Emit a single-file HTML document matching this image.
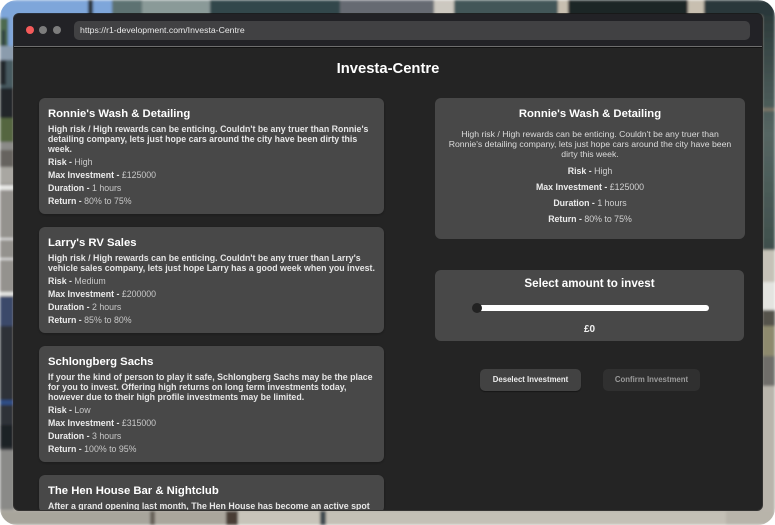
<!DOCTYPE html>
<html><head><meta charset="utf-8">
<style>
html,body{margin:0;padding:0;width:775px;height:525px;overflow:hidden;background:#fff;font-family:"Liberation Sans",sans-serif;color:#eee}
#bg{position:absolute;left:0;top:0}
.win{position:absolute;left:14px;top:14px;width:748px;height:496px;background:#242424;border-radius:5px;overflow:hidden;box-shadow:0 0 0 1px rgba(20,20,20,.8);filter:blur(.25px)}
.bar{position:absolute;left:0;top:0;width:748px;height:32px;background:#222226;border-bottom:1px solid #6e6e6e;box-shadow:0 1px 0 #111}
.dot{position:absolute;top:12px;width:8px;height:8px;border-radius:50%;background:#7c7c7c}
.url{position:absolute;left:60px;top:7px;width:676px;height:19px;background:#414143;border-radius:5px;font-size:8.7px;line-height:19px;text-indent:6px;color:#e8e8e8}
h1{position:absolute;left:0;top:47px;width:748px;margin:0;text-align:center;font-size:14.8px;line-height:17px;color:#fff}
.card{position:absolute;left:25px;width:327px;padding:8px 9px;background:#484848;border-radius:6px;box-sizing:content-box;box-shadow:0 1px 2px rgba(0,0,0,.25)}
.card h2,.det h2{margin:0 0 3px;font-size:11.3px;line-height:15px;color:#fff;position:relative;top:1px}
.card p{margin:0;font-size:8.8px;line-height:10px;font-weight:bold;color:#e6e6e6}
.card div{font-size:8.8px;line-height:13px;color:#c8c8c8}
.card div:first-of-type{margin-top:2px}
b{color:#ececec}
.det{position:absolute;left:421px;top:84px;width:310px;height:141px;background:#484848;border-radius:6px;text-align:center}
.det h2{position:absolute;top:9px;left:0;width:100%}
.det p{position:absolute;top:31px;left:0;width:310px;margin:0;font-size:8.7px;line-height:10px;color:#dcdcdc}
.det div{position:absolute;left:0;width:100%;font-size:8.8px;line-height:11px;color:#d0d0d0}
.sel{position:absolute;left:421px;top:256px;width:309px;height:71px;background:#484848;border-radius:6px;text-align:center}
.sel h3{position:absolute;left:0;top:6px;width:100%;margin:0;font-size:11.6px;line-height:15px;color:#fff}
.track{position:absolute;left:42px;top:35px;width:232px;height:6px;background:#fff;border-radius:3px}
.knob{position:absolute;left:37px;top:33px;width:10px;height:10px;border-radius:50%;background:#222}
.amt{position:absolute;left:0;top:54px;width:100%;font-size:10px;line-height:12px;font-weight:bold;color:#f0f0f0}
.btn{position:absolute;top:355px;height:22px;border-radius:5px;text-align:center;font-size:7.8px;line-height:22px;font-weight:bold}
</style></head><body>
<svg id="bg" width="775" height="525" viewBox="0 0 775 525">
<defs><clipPath id="c"><rect width="775" height="525" rx="17"/></clipPath>
<filter id="f" x="-2%" y="-2%" width="104%" height="104%"><feGaussianBlur stdDeviation="1.2"/></filter>
<linearGradient id="r" x1="0" y1="0" x2="0" y2="1"><stop offset="0" stop-color="#2e3c3c"/><stop offset=".5" stop-color="#566663"/><stop offset="1" stop-color="#3f4f4c"/></linearGradient></defs>
<g clip-path="url(#c)"><g filter="url(#f)">
<rect width="775" height="525" fill="#b5b1aa"/>
<rect width="120" height="16" fill="#7ea6da"/>
<rect x="0" y="16" width="14" height="32" fill="#7ea6da"/>
<rect x="0" y="18" width="8" height="40" fill="#4d6a50"/><rect x="2" y="30" width="3" height="50" fill="#2b3a40"/>
<rect x="0" y="46" width="14" height="14" fill="#8b9cad"/>
<rect x="0" y="60" width="14" height="28" fill="#465a60"/><rect x="0" y="60" width="6" height="25" fill="#20262c"/>
<rect x="0" y="88" width="14" height="30" fill="#24282a"/>
<rect x="0" y="118" width="14" height="24" fill="#55663f"/>
<rect x="0" y="142" width="14" height="8" fill="#8b8b88"/>
<rect x="0" y="150" width="14" height="35" fill="#66635e"/>
<rect x="0" y="167" width="14" height="17" fill="#a9a7a2"/>
<rect x="0" y="185" width="14" height="5" fill="#e8e8e6"/>
<rect x="0" y="190" width="14" height="105" fill="#94928e"/>
<rect x="0" y="238" width="14" height="2" fill="#ddd"/><rect x="0" y="258" width="14" height="2" fill="#ddd"/>
<rect x="0" y="292" width="14" height="4" fill="#e6e6e4"/>
<rect x="0" y="296" width="14" height="155" fill="#2f3338"/>
<rect x="0" y="296" width="14" height="30" fill="#3a4a6a"/>
<rect x="0" y="400" width="14" height="5" fill="#2e4d85"/>
<rect x="0" y="425" width="14" height="22" fill="#1e2228"/>
<rect x="0" y="450" width="14" height="60" fill="#8a8a88"/>
<rect x="120" y="0" width="100" height="16" fill="#4f6568"/>
<rect x="88" y="0" width="5" height="16" fill="#2c3234"/>
<rect x="112" y="0" width="30" height="16" fill="#5d7272"/>
<rect x="142" y="0" width="70" height="16" fill="#8a9a98"/>
<rect x="210" y="0" width="130" height="16" fill="#33474c"/>
<rect x="340" y="0" width="95" height="16" fill="#666a72"/>
<rect x="434" y="0" width="20" height="16" fill="#ccc8c0"/>
<rect x="454" y="0" width="105" height="16" fill="#435658"/>
<rect x="558" y="0" width="10" height="16" fill="#c8bfb0"/>
<rect x="568" y="0" width="120" height="16" fill="#1d2628"/>
<rect x="688" y="0" width="16" height="16" fill="#c8bfb0"/>
<rect x="704" y="0" width="71" height="16" fill="#29373a"/>
<rect x="762" y="16" width="13" height="235" fill="url(#r)"/>
<rect x="762" y="108" width="13" height="3" fill="#7b7566"/>
<rect x="762" y="250" width="13" height="60" fill="#c6c2b8"/>
<rect x="762" y="282" width="13" height="28" fill="#e4e4e0"/>
<rect x="762" y="310" width="13" height="16" fill="#55524b"/>
<rect x="762" y="326" width="13" height="30" fill="#8e8a6e"/>
<rect x="762" y="356" width="13" height="30" fill="#6f6e6a"/>
<rect x="762" y="386" width="13" height="125" fill="#b9b5ac"/>
<rect x="0" y="511" width="775" height="14" fill="#aaa69c"/>
<rect x="0" y="511" width="150" height="14" fill="#a8a59c"/>
<rect x="150" y="511" width="5" height="14" fill="#666058"/>
<rect x="226" y="511" width="12" height="14" fill="#4a3c34"/>
<rect x="238" y="511" width="82" height="14" fill="#c8c4ba"/>
<rect x="320" y="511" width="6" height="14" fill="#3f4a50"/>
<rect x="326" y="511" width="400" height="14" fill="#c4c0b6"/>
<rect x="726" y="511" width="49" height="14" fill="#b8b4aa"/>
</g></g></svg>

<div class="win">
<div class="bar"><span class="dot" style="left:12px;background:#f45a5a"></span><span class="dot" style="left:25px"></span><span class="dot" style="left:39px"></span>
<div class="url">https://r1-development.com/Investa-Centre</div></div>
<h1>Investa-Centre</h1>

<div class="card" style="top:84px;height:100px"><h2>Ronnie's Wash &amp; Detailing</h2>
<p>High risk / High rewards can be enticing. Couldn't be any truer than Ronnie's detailing company, lets just hope cars around the city have been dirty this week.</p>
<div><b>Risk -</b> High</div><div><b>Max Investment -</b> £125000</div><div><b>Duration -</b> 1 hours</div><div><b>Return -</b> 80% to 75%</div></div>

<div class="card" style="top:213px;height:90px"><h2>Larry's RV Sales</h2>
<p>High risk / High rewards can be enticing. Couldn't be any truer than Larry's vehicle sales company, lets just hope Larry has a good week when you invest.</p>
<div><b>Risk -</b> Medium</div><div><b>Max Investment -</b> £200000</div><div><b>Duration -</b> 2 hours</div><div><b>Return -</b> 85% to 80%</div></div>

<div class="card" style="top:332px;height:100px"><h2>Schlongberg Sachs</h2>
<p>If your the kind of person to play it safe, Schlongberg Sachs may be the place for you to invest. Offering high returns on long term investments today, however due to their high profile investments may be limited.</p>
<div><b>Risk -</b> Low</div><div><b>Max Investment -</b> £315000</div><div><b>Duration -</b> 3 hours</div><div><b>Return -</b> 100% to 95%</div></div>

<div class="card" style="top:461px;height:22px;overflow:hidden"><h2>The Hen House Bar &amp; Nightclub</h2>
<p>After a grand opening last month, The Hen House has become an active spot</p></div>

<div class="det"><h2>Ronnie's Wash &amp; Detailing</h2>
<p>High risk / High rewards can be enticing. Couldn't be any truer than<br>Ronnie's detailing company, lets just hope cars around the city have been<br>dirty this week.</p>
<div style="top:68px"><b>Risk -</b> High</div><div style="top:84px"><b>Max Investment -</b> £125000</div><div style="top:100px"><b>Duration -</b> 1 hours</div><div style="top:116px"><b>Return -</b> 80% to 75%</div></div>

<div class="sel"><h3>Select amount to invest</h3><div class="track"></div><div class="knob"></div><div class="amt">£0</div></div>

<div class="btn" style="left:466px;width:101px;background:#424242;color:#ececec;box-shadow:0 1px 1px rgba(0,0,0,.4)">Deselect Investment</div>
<div class="btn" style="left:589px;width:97px;background:#303030;color:#9a9a9a">Confirm Investment</div>
</div>
</body></html>
